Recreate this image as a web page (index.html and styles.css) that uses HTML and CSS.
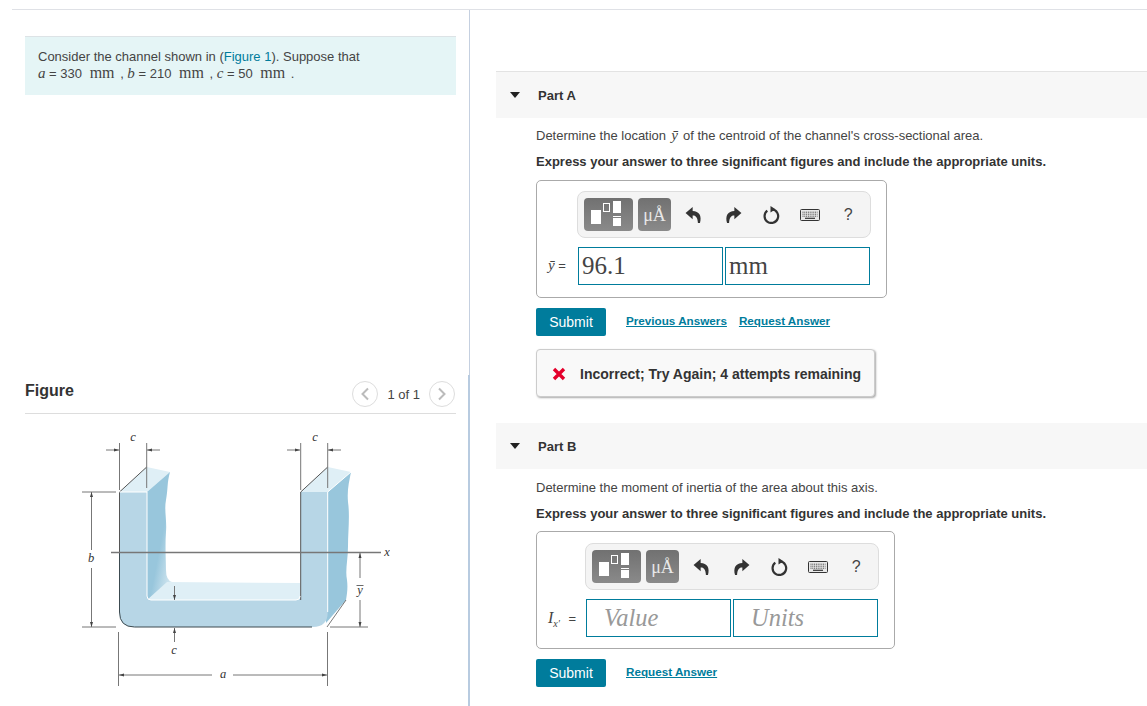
FILE: index.html
```html
<!DOCTYPE html>
<html lang="en">
<head>
<meta charset="utf-8">
<title>Channel centroid</title>
<link rel="stylesheet" href="styles.css">
</head>
<body>
<svg class="defs" width="0" height="0" aria-hidden="true">
  <symbol id="i-template" viewBox="0 0 49 33">
    <rect x="7" y="12" width="10" height="14" fill="#fff"/>
    <rect x="19.500" y="5.500" width="6" height="8" fill="none" stroke="#fff"/>
    <rect x="29" y="3" width="8" height="12" fill="#fff"/>
    <rect x="29" y="18" width="8" height="1" fill="#fff"/>
    <rect x="29" y="20" width="8" height="8" fill="#fff"/>
  </symbol>
  <symbol id="i-undo" viewBox="0 0 16 16">
    <path d="M6.800 .8 .5 6.300l6.300 5.500V8.400c2.900 0 4.400 1.600 4.700 6.800h1.800C15.200 8.600 12.500 4.600 6.800 4.400z" fill="#333"/>
  </symbol>
  <symbol id="i-reset" viewBox="0 0 18 18">
    <path d="M10.200 3.400a6.800 6.800 0 1 1-4.900 1.300" fill="none" stroke="#333" stroke-width="2.200"/>
    <path d="M8.500 0l5 3.300-5 3.300z" fill="#333"/>
  </symbol>
  <symbol id="i-keys" viewBox="0 0 20 12">
    <rect x=".5" y=".5" width="19" height="11" rx="1" fill="#e8e8e8" stroke="#333"/>
    <path d="M2.500 3.200h15M2.500 5.200h15M2.500 7.200h15" stroke="#444" stroke-width="1" stroke-dasharray="1 .8"/>
    <path d="M5 9.300h10" stroke="#333" stroke-width="1.200"/>
  </symbol>
</svg>

<div class="page">
  <section class="left">
    <div class="problem">
      <div>Consider the channel shown in (<a class="fig-link" href="#">Figure 1</a>). Suppose that</div>
      <div><i class="var">a</i> = 330 <span class="unit">mm</span> , <i class="var">b</i> = 210 <span class="unit">mm</span> , <i class="var">c</i> = 50 <span class="unit">mm</span> .</div>
    </div>
    <div class="figure-head">
      <h2 class="figure-title">Figure</h2>
      <div class="pager">
        <span class="pager-btn"><svg width="10" height="14" viewBox="0 0 10 14"><path d="M8 1.500 2.500 7 8 12.500" fill="none" stroke="#bbb" stroke-width="2"/></svg></span>
        <span class="pager-text">1 of 1</span>
        <span class="pager-btn"><svg width="10" height="14" viewBox="0 0 10 14"><path d="M2 1.500 7.500 7 2 12.500" fill="none" stroke="#bbb" stroke-width="2"/></svg></span>
      </div>
    </div>
    <svg class="diagram" width="320" height="270" viewBox="70 425 320 270">
      <defs>
        <linearGradient id="inner" x1="0" y1="0" x2="1" y2="1">
          <stop offset=".55" stop-color="#98c6dc"/>
          <stop offset="1" stop-color="#e3f0f6"/>
        </linearGradient>
      </defs>
      <path d="M119.500 492 146.700 467 170 472 147 492z" fill="#dfeff6"/>
      <path d="M300.700 492 327.700 467 351 472 327.700 492z" fill="#dfeff6"/>
      <path d="M147 492 170 472C167 482 168 490 166 500c-2 10 1 20 0 32-1 14 0 30 0 38q0 10 6 12l-25 18z" fill="url(#inner)"/>
      <path d="M327.700 492 351 472c-2 10-4 18-3 30 2 14 0 30 0 44 0 14-3 24-1 34 1 8 0 14-1 20l-20 23z" fill="#98c6dc"/>
      <path d="M147 600 167 582 300 583V600z" fill="#dfeff6"/>
      <path d="M119.500 492H147V596q0 4 4 4H296q4 0 4.700-4V492H327.700V612q0 15-15 15H134q-14.500 0-14.500-15z" fill="#b7d6e6"/>
      <path d="M119.500 552V612q0 15 15 15H312" fill="none" stroke="#3c4a50" stroke-width="1"/>
      <path d="M119.500 492V552M119.500 492 146.700 467M300.700 492V600M300.700 492 327.700 467" fill="none" stroke="#555" stroke-width="1"/>
      <path d="M147 492H119.500M147 492V596q0 4 4 4H296q4 0 4.200-4M327.700 492V612M327.700 492 351 472" fill="none" stroke="#fff" stroke-width="1"/>
      <path d="M327 627 346 600" fill="none" stroke="#555" stroke-width=".8"/>
      <path d="M111 552.500H381" stroke="#777" stroke-width="1.500"/>
      <g class="dim">
        <path d="M119.500 443V490M146.700 443V488M300.700 443V490M327.700 443V488"/>
        <path d="M106 450H119M147 450H160M287 450H300M328 450H341"/>
        <path d="M82 492H116M82 627H116M330 627H368M91.500 492V550M91.500 568V627"/>
        <path d="M360 553V578M360 600V627"/>
        <path d="M174.500 586V600M174.500 628V642"/>
        <path d="M118.500 632V686M327.500 632V686M119 675H212M233 675H327"/>
      </g>
      <g class="arrow">
        <path d="M119 450l-5-1.500v3zM147 450l5-1.500v3zM300 450l-5-1.500v3zM328 450l5-1.500v3z"/>
        <path d="M91.500 492l-1.500 5h3zM91.500 627l-1.500-5h3zM360 553l-1.500 5h3zM360 627l-1.500-5h3z"/>
        <path d="M174.500 600l-1.500-5h3zM174.500 628l-1.500 5h3z"/>
        <path d="M119 675l5-1.500v3zM327 675l-5-1.500v3z"/>
      </g>
      <g class="dim-label">
        <text x="133" y="441">c</text>
        <text x="315" y="441">c</text>
        <text x="91" y="562">b</text>
        <text x="387" y="556">x</text>
        <text x="360" y="594">y</text>
        <text x="174" y="654">c</text>
        <text x="223" y="678">a</text>
      </g>
      <path d="M356.500 585.500H363.500" stroke="#444" stroke-width=".8"/>
    </svg>
  </section>
  <div class="thumb"></div>

  <main class="right">
    <header class="part-head part-first"><span class="caret"></span><h3 class="part-title">Part A</h3></header>
    <div class="part-body">
      <p class="prompt">Determine the location <span class="math math-inline">y&#772;</span> of the centroid of the channel's cross-sectional area.</p>
      <p class="prompt strong">Express your answer to three significant figures and include the appropriate units.</p>
      <div class="answer-box box-a">
        <div class="math-label label-a"><span class="math">y&#772;</span> =</div>
        <div class="answer-main">
          <div class="toolbar">
            <span class="tool-btn tool-wide"><svg width="49" height="33"><use href="#i-template"/></svg></span>
            <span class="tool-btn tool-mu">μÅ</span>
            <span class="tool-icon"><svg width="18" height="18"><use href="#i-undo"/></svg></span>
            <span class="tool-icon flip"><svg width="18" height="18"><use href="#i-undo"/></svg></span>
            <span class="tool-icon"><svg width="18" height="18"><use href="#i-reset"/></svg></span>
            <span class="tool-icon"><svg width="20" height="12"><use href="#i-keys"/></svg></span>
            <span class="tool-icon tool-help">?</span>
          </div>
          <div class="inputs">
            <div class="field">96.1</div>
            <div class="field">mm</div>
          </div>
        </div>
      </div>
      <div class="actions">
        <a class="submit" href="#">Submit</a>
        <div class="links"><a class="link" href="#">Previous Answers</a><a class="link" href="#">Request Answer</a></div>
      </div>
      <div class="alert">
        <svg width="14" height="14" viewBox="0 0 14 14"><path d="M2 2 12 12M12 2 2 12" stroke="#e4002b" stroke-width="3.400"/></svg>
        <span class="alert-text">Incorrect; Try Again; 4 attempts remaining</span>
      </div>
    </div>

    <header class="part-head part-second"><span class="caret"></span><h3 class="part-title">Part B</h3></header>
    <div class="part-body">
      <p class="prompt">Determine the moment of inertia of the area about this axis.</p>
      <p class="prompt strong">Express your answer to three significant figures and include the appropriate units.</p>
      <div class="answer-box box-b">
        <div class="math-label label-b"><span class="math math-i">I<sub class="sub">x′</sub></span> =</div>
        <div class="answer-main">
          <div class="toolbar">
            <span class="tool-btn tool-wide"><svg width="49" height="33"><use href="#i-template"/></svg></span>
            <span class="tool-btn tool-mu">μÅ</span>
            <span class="tool-icon"><svg width="18" height="18"><use href="#i-undo"/></svg></span>
            <span class="tool-icon flip"><svg width="18" height="18"><use href="#i-undo"/></svg></span>
            <span class="tool-icon"><svg width="18" height="18"><use href="#i-reset"/></svg></span>
            <span class="tool-icon"><svg width="20" height="12"><use href="#i-keys"/></svg></span>
            <span class="tool-icon tool-help">?</span>
          </div>
          <div class="inputs">
            <div class="field placeholder">Value</div>
            <div class="field placeholder">Units</div>
          </div>
        </div>
      </div>
      <div class="actions">
        <a class="submit" href="#">Submit</a>
        <div class="links"><a class="link" href="#">Request Answer</a></div>
      </div>
    </div>
  </main>
</div>
</body>
</html>
```
FILE: styles.css
```css
* { box-sizing: border-box; }
html, body { margin: 0; height: 100%; overflow: hidden; background: #fff; }
body { font-family: "Liberation Sans", Arial, sans-serif; color: #333; font-size: 13px; padding: 9px 0 0 12px; }
.defs { position: absolute; }
.page { position: relative; display: flex; height: 697px; border-top: 1px solid #dfe1e6; }

.left { flex: 0 0 458px; border-right: 1px solid #c5d0e0; padding: 26px 13px 0 13px; }
.problem { height: 59px; background: #e5f5f6; border-top: 1px solid #dde3e6; padding: 12px 13px 0; font-size: 13px; line-height: 16px; color: #444; }
.fig-link { color: #007c9c; text-decoration: none; }
.var { font-family: "Liberation Serif", serif; font-size: 15px; font-weight: 400; }
.unit { font-family: "Liberation Serif", serif; font-size: 16px; margin: 0 2px 0 4px; }

.figure-head { display: flex; align-items: center; justify-content: space-between; height: 34px; margin-top: 285px; border-bottom: 1px solid #ddd; padding-bottom: 5px; }
.figure-title { align-self: flex-start; margin: 2px 0 0; font-size: 16px; line-height: 18px; font-weight: 700; color: #333; }
.pager { display: flex; align-items: center; gap: 9px; margin-right: 1px; }
.pager-btn { width: 26px; height: 26px; border: 1px solid #ddd; border-radius: 50%; display: flex; align-items: center; justify-content: center; }
.pager-text { font-size: 13px; color: #444; }
.diagram { display: block; margin: 11px 0 0 45px; }
.dim { fill: none; stroke: #777; stroke-width: 1; }
.arrow { fill: #444; }
.dim-label { font-family: "Liberation Serif", serif; font-style: italic; font-size: 12.500px; text-anchor: middle; fill: #333; }

.thumb { position: absolute; left: 456px; top: 365px; width: 2px; height: 332px; background: #b8cbe0; }

.right { flex: 1; padding: 61px 0 0 26px; min-width: 0; }
.part-head { display: flex; align-items: center; height: 46px; background: #f7f7f7; padding-left: 14px; }
.part-first { height: 47px; border-top: 1px solid #e3e3e3; }
.part-second { margin-top: 26px; }
.caret { width: 0; height: 0; border-left: 5.500px solid transparent; border-right: 5.500px solid transparent; border-top: 6px solid #222; }
.part-title { margin: 0 0 0 18px; font-size: 13px; font-weight: 700; color: #333; }
.part-body { padding-left: 40px; }
.prompt { margin: 10px 0 0; line-height: 18px; font-size: 13px; color: #444; }
.part-first + .part-body .prompt:first-child { margin-top: 8px; }
.prompt + .prompt { margin-top: 8px; }
.strong { font-weight: 700; font-size: 13px; color: #333; }
.math { font-family: "Liberation Serif", serif; font-style: italic; font-size: 15px; }
.math-inline { margin: 0 1.500px; }
.math-i { font-size: 16px; margin-right: 5px; }
.sub { font-size: 10px; }

.answer-box { display: flex; width: fit-content; margin-top: 9px; border: 1px solid #aaa; border-radius: 5px; padding: 10px 15px 12px 11px; }
.box-b { margin-top: 8px; padding-top: 11px; padding-bottom: 11px; }
.math-label { padding-top: 66px; font-size: 13px; color: #444; white-space: nowrap; }
.label-a { width: 29px; }
.label-b { width: 37px; }
.answer-main { width: 294px; }
.toolbar { display: flex; align-items: center; height: 47px; background: #f4f4f4; border: 1px solid #ddd; border-radius: 8px; padding-left: 6px; }
.tool-btn { display: flex; align-items: center; justify-content: center; height: 33px; border-radius: 4px; background: linear-gradient(#717171, #8a8a8a); }
.tool-wide { width: 49px; margin-right: 5px; }
.tool-mu { width: 33px; margin-right: 4px; font-family: "Liberation Serif", serif; font-size: 18px; color: #e8e8e8; padding-top: 1px; }
.tool-icon { flex: 0 0 38.500px; display: flex; align-items: center; justify-content: center; height: 33px; }
.flip svg { transform: scaleX(-1); }
.tool-help { font-size: 16px; color: #444; }
.inputs { display: flex; gap: 2px; margin: 9px 0 0 1px; }
.field { width: 145px; height: 38px; border: 1px solid #007c9c; padding-left: 3px; font-family: "Liberation Serif", serif; font-size: 25px; line-height: 36px; color: #444; }
.placeholder { font-style: italic; font-size: 24.500px; color: #999; padding-left: 17px; }

.actions { display: flex; align-items: center; margin-top: 10px; }
.submit { display: flex; align-items: center; justify-content: center; width: 70px; height: 28px; background: #007c9c; color: #fff; border-radius: 2px; font-size: 14px; text-decoration: none; }
.links { display: flex; gap: 12px; margin: 0 0 4px 20px; }
.link { font-size: 11.700px; font-weight: 700; color: #007c9c; }
.alert { display: flex; align-items: center; gap: 14px; width: 339px; height: 48px; margin-top: 13px; padding: 1px 0 0 15px; background: #f9f9f9; border: 1px solid #ccc; border-radius: 4px; box-shadow: 1px 1px 2px #aaa; }
.alert-text { font-size: 14px; font-weight: 700; color: #333; white-space: nowrap; }
```
